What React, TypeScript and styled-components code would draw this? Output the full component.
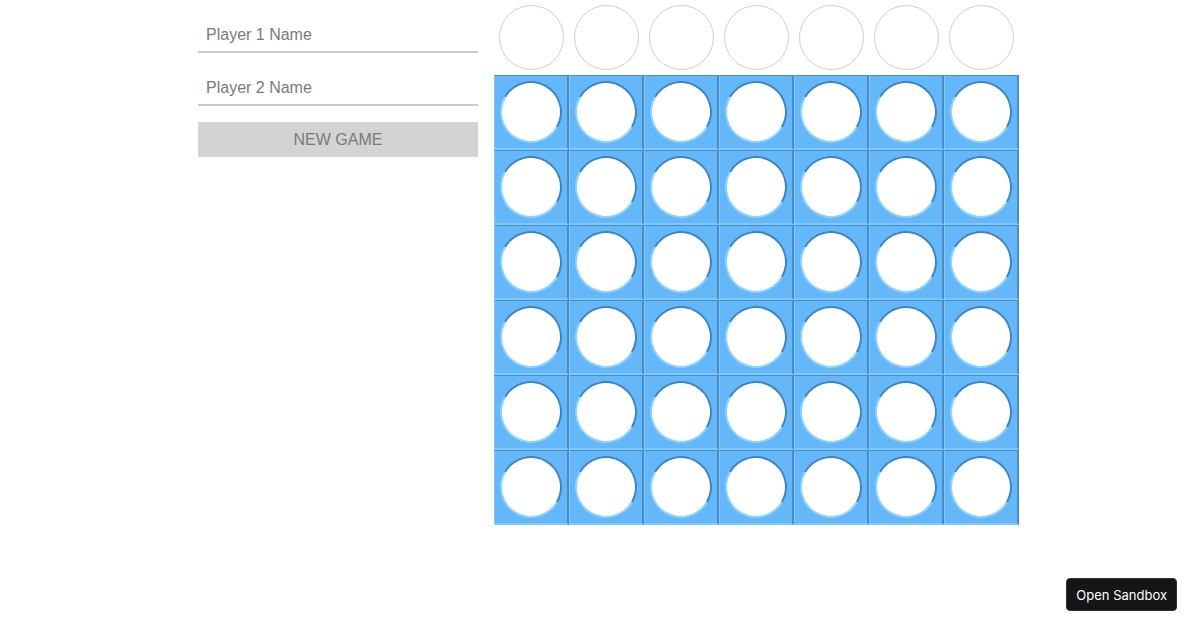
import React, { useState } from "react";
import styled, { createGlobalStyle } from "styled-components";

const ROWS = 6;
const COLS = 7;

const GlobalStyle = createGlobalStyle`
  html, body {
    margin: 0;
    padding: 0;
    background: #ffffff;
    font-family: "Liberation Sans", Arial, sans-serif;
  }
`;

const App = () => {
  const [player1, setPlayer1] = useState("");
  const [player2, setPlayer2] = useState("");

  return (
    <>
      <GlobalStyle />
      <Page>
        <Sidebar>
          <NameInput
            placeholder="Player 1 Name"
            value={player1}
            onChange={(e) => setPlayer1(e.target.value)}
          />
          <NameInput
            placeholder="Player 2 Name"
            value={player2}
            onChange={(e) => setPlayer2(e.target.value)}
          />
          <NewGameButton disabled>NEW GAME</NewGameButton>
        </Sidebar>
        <Game>
          <DropRow>
            {Array.from({ length: COLS }).map((_, c) => (
              <DropSlot key={c}>
                <DropCircle />
              </DropSlot>
            ))}
          </DropRow>
          <Board>
            {Array.from({ length: ROWS * COLS }).map((_, i) => (
              <Cell key={i}>
                <Hole />
              </Cell>
            ))}
          </Board>
        </Game>
      </Page>
      <SandboxButton>Open Sandbox</SandboxButton>
    </>
  );
};

export default App;

const Page = styled.div`
  display: flex;
  align-items: flex-start;
  gap: 16px;
  padding-left: 198px;
`;

const Sidebar = styled.div`
  width: 280px;
  display: flex;
  flex-direction: column;
  gap: 15px;
  padding-top: 15px;
`;

const NameInput = styled.input`
  box-sizing: border-box;
  height: 38px;
  width: 100%;
  padding: 3px 8px 0;
  border: none;
  border-bottom: 2px solid #c9c9c9;
  outline: none;
  font-family: "Liberation Sans", Arial, sans-serif;
  font-size: 16px;
  color: #333;
  background: transparent;

  &::placeholder {
    color: #7a7a7a;
  }
`;

const NewGameButton = styled.button`
  margin-top: 1px;
  height: 35px;
  width: 100%;
  border: none;
  background: #d3d3d3;
  color: #7a7a7a;
  font-family: "Liberation Sans", Arial, sans-serif;
  font-size: 16px;
  cursor: default;
`;

const Game = styled.div`
  display: flex;
  flex-direction: column;
  width: 525px;
`;

const DropRow = styled.div`
  display: grid;
  grid-template-columns: repeat(${COLS}, 75px);
  height: 75px;
`;

const DropSlot = styled.div`
  display: flex;
  align-items: center;
  justify-content: center;
`;

const DropCircle = styled.div`
  box-sizing: border-box;
  width: 65px;
  height: 65px;
  border-radius: 50%;
  border: 1px solid #cfcfcf;
  background: #fff;
`;

const Board = styled.div`
  display: grid;
  grid-template-columns: repeat(${COLS}, 75px);
  grid-template-rows: repeat(${ROWS}, 75px);
`;

const Cell = styled.div`
  box-sizing: border-box;
  display: flex;
  align-items: center;
  justify-content: center;
  background: #64b8fa;
  border-style: solid;
  border-width: 1px 2px 2px 1px;
  border-color: #4a8cc2 #4a8cc2 #80c9ff #80c9ff;
`;

const Hole = styled.div`
  box-sizing: border-box;
  width: 62px;
  height: 62px;
  margin: 0 1px 1px 0;
  border-radius: 50%;
  background: #ffffff;
  border: 2px solid;
  border-color: #3f84c0 #3f84c0 #8fd2ff #8fd2ff;
  transform: rotate(-15deg);
`;

const SandboxButton = styled.button`
  position: fixed;
  right: 23px;
  bottom: 19px;
  height: 33px;
  padding: 0 9px;
  border: 1px solid #333;
  border-radius: 4px;
  background: #151515;
  color: #ffffff;
  font-family: Inter, "Liberation Sans", sans-serif;
  font-size: 13px;
`;
